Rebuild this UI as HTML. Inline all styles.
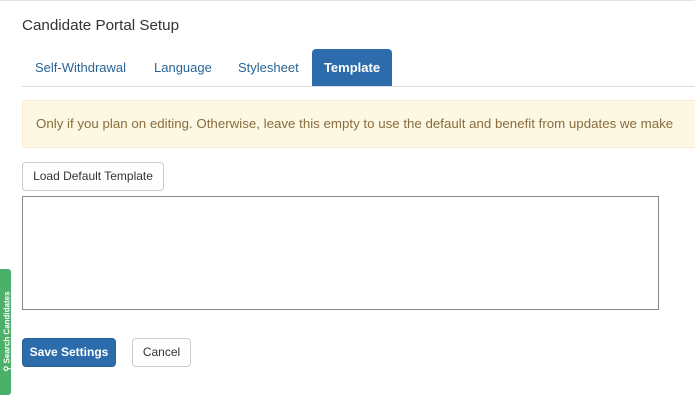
<!DOCTYPE html>
<html><head><style>
*{box-sizing:border-box;margin:0;padding:0}
body{width:695px;height:409px;overflow:hidden;background:#fff;font-family:"Liberation Sans",sans-serif;position:relative}
.a{position:absolute}
h1{position:absolute;left:22px;top:17px;font-size:15.2px;font-weight:normal;color:#333}
.tab{position:absolute;top:49px;height:37px;line-height:37px;font-size:13px;color:#2a6496}
.line{left:22px;right:0;top:86px;border-top:1px solid #ddd}
.alert{left:22px;top:100px;width:680px;height:48px;background:#fcf8e3;border:1px solid #faebcc;border-radius:4px;padding:0 0 0 13px;line-height:46px;font-size:13.3px;color:#8a6d3b;white-space:nowrap}
.btn{position:absolute;border:1px solid #ccc;border-radius:4px;background:#fff;font-size:12px;color:#333;text-align:center}
</style></head><body>
<div class="a" style="left:0;right:0;top:0;border-top:1px solid #e3e3e3"></div>
<h1>Candidate Portal Setup</h1>
<div class="tab" style="left:35px">Self-Withdrawal</div>
<div class="tab" style="left:154px">Language</div>
<div class="tab" style="left:238px">Stylesheet</div>
<div class="tab" style="left:312px;width:80px;background:#2c6cac;color:#fff;border-radius:4px 4px 0 0;text-align:center;font-weight:bold">Template</div>
<div class="a line"></div>
<div class="a alert">Only if you plan on editing. Otherwise, leave this empty to use the default and benefit from updates we make</div>
<div class="btn" style="left:22px;top:162px;width:142px;height:29px;line-height:27px">Load Default Template</div>
<div class="a" style="left:22px;top:196px;width:637px;height:114px;border:1px solid #888"></div>
<div class="btn" style="left:22px;top:338px;width:94px;height:29px;line-height:27px;background:#2c6cac;border-color:#2a5f96;color:#fff;font-weight:bold">Save Settings</div>
<div class="btn" style="left:132px;top:338px;width:59px;height:29px;line-height:27px">Cancel</div>
<div class="a" style="left:0;top:269px;width:11px;height:126px;background:#4caf6a;border-radius:0 3px 3px 0"></div>
<div class="a" style="left:-56px;top:326px;width:126px;height:11px;transform:rotate(-90deg);color:#fff;font-size:8px;font-weight:bold;line-height:11px;text-align:center">&#9906; Search Candidates</div>
</body></html>
